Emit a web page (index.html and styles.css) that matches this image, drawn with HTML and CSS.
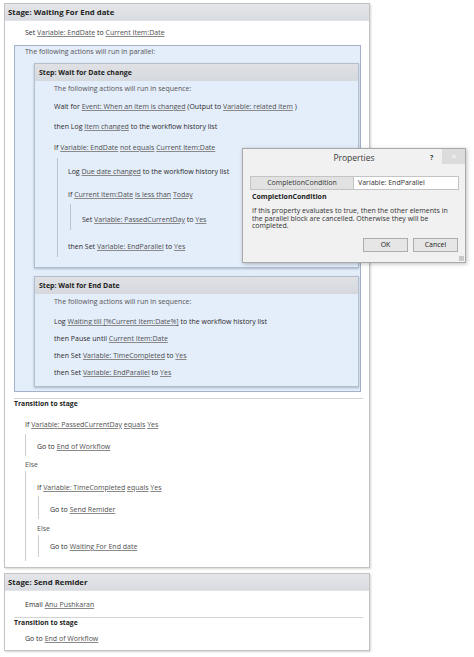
FILE: index.html
```html
<!DOCTYPE html>
<html lang="en">
<head>
  <meta charset="UTF-8" />
  <title>Workflow - Waiting For End date</title>
  <link rel="stylesheet" href="styles.css">
</head>
<body>
  <div class="stage">
    <div class="stage-head">Stage: Waiting For End date</div>
    <div class="stage-body">
      <div class="row in1 mt6">Set <a>Variable: EndDate</a> to <a>Current Item:Date</a></div>

      <div class="parallel">
        <div class="row in-par dim">The following actions will run in parallel:</div>

        <div class="step">
          <div class="step-head">Step: Wait for Date change</div>
          <div class="step-body">
            <div class="row mt2 dim">The following actions will run in sequence:</div>
            <div class="row mt6">Wait for <a>Event: When an item is changed</a> (Output to <a>Variable: related item</a> )</div>
            <div class="row mt8">then Log <a>Item changed</a> to the workflow history list</div>
            <div class="row mt9">If <a>Variable: EndDate</a> <a>not equals</a> <a>Current Item:Date</a></div>
            <div class="block block-one">
              <div class="row">Log <a>Due date changed</a> to the workflow history list</div>
              <div class="row mt11">If <a>Current Item:Date</a> <a>is less than</a> <a>Today</a></div>
              <div class="block block-two">
                <div class="row">Set <a>Variable: PassedCurrentDay</a> to <a>Yes</a></div>
              </div>
              <div class="row mt11">then Set <a>Variable: EndParallel</a> to <a>Yes</a></div>
            </div>
          </div>
        </div>

        <div class="step step-second">
          <div class="step-head">Step: Wait for End Date</div>
          <div class="step-body short">
            <div class="row mt2 dim">The following actions will run in sequence:</div>
            <div class="row mt8">Log <a>Waiting till [%Current Item:Date%]</a> to the workflow history list</div>
            <div class="row mt5">then Pause until <a>Current Item:Date</a></div>
            <div class="row mt5">then Set <a>Variable: TimeCompleted</a> to <a>Yes</a></div>
            <div class="row mt5">then Set <a>Variable: EndParallel</a> to <a>Yes</a></div>
          </div>
        </div>
      </div>

      <div class="transition">
        <div class="trans-title">Transition to stage</div>
        <div class="row in1 mt10">If <a>Variable: PassedCurrentDay</a> <a>equals</a> <a>Yes</a></div>
        <div class="branch if-body">
          <div class="row">Go to <a>End of Workflow</a></div>
        </div>
        <div class="row in1 mt3 dim">Else</div>
        <div class="branch else-body">
          <div class="row">If <a>Variable: TimeCompleted</a> <a>equals</a> <a>Yes</a></div>
          <div class="branch inner inner-if">
            <div class="row">Go to <a>Send Remider</a></div>
          </div>
          <div class="row mt4 dim">Else</div>
          <div class="branch inner inner-else">
            <div class="row">Go to <a>Waiting For End date</a></div>
          </div>
        </div>
      </div>
    </div>
  </div>

  <div class="stage stage-second">
    <div class="stage-head">Stage: Send Remider</div>
    <div class="stage-body last">
      <div class="row in1 mt8">Email <a>Anu Pushkaran</a></div>
      <div class="transition small">
        <div class="trans-title">Transition to stage</div>
        <div class="row in1 mt5">Go to <a>End of Workflow</a></div>
      </div>
    </div>
  </div>

  <!-- Properties dialog -->
  <div class="dialog">
    <div class="dialog-title">
      <span>Properties</span>
      <span class="help">?</span>
      <span class="close">&#x2715;</span>
    </div>
    <div class="prop-grid">
      <div class="prop-name">CompletionCondition</div>
      <div class="prop-value">Variable: EndParallel</div>
    </div>
    <div class="prop-label">CompletionCondition</div>
    <p class="prop-desc">If this property evaluates to true, then the other elements in the parallel block are cancelled. Otherwise they will be completed.</p>
    <div class="dialog-buttons">
      <button>OK</button>
      <button>Cancel</button>
    </div>
    <div class="grip"></div>
  </div>
</body>
</html>
```

FILE: styles.css
```css
body {
  margin: 0;
  background: white;
  font-family: "Open Sans", "Noto Sans", sans-serif;
  font-size: 7px;
  color: #2b2b2b;
  position: relative;
  width: 474px;
  height: 657px;
  overflow: hidden;
}

a {
  color: #505050;
  text-decoration: underline;
  text-decoration-color: #8a8a8a;
}

.row {
  line-height: 12px;
  height: 12px;
  white-space: nowrap;
}

.dim {
  color: #555;
}

.in1 { padding-left: 11px; }
.mt2 { margin-top: 2px; }
.mt3 { margin-top: 3px; }
.mt4 { margin-top: 4px; }
.mt5 { margin-top: 5px; }
.mt6 { margin-top: 6px; }
.mt8 { margin-top: 8px; }
.mt9 { margin-top: 9px; }
.mt10 { margin-top: 10px; }
.mt11 { margin-top: 11px; }

/* stages */
.stage {
  margin: 3px 0 0 4px;
  width: 366px;
  box-sizing: border-box;
  border: 1px solid #c3c3c3;
  background: white;
  box-shadow: 1px 1px 2px rgba(0, 0, 0, 0.18);
}

.stage-second {
  margin-top: 5px;
}

.stage-head {
  height: 17px;
  line-height: 17px;
  padding-left: 3px;
  font-size: 7.8px;
  font-weight: bold;
  color: #222;
  background: linear-gradient(#e4e6e9, #d8dbe0);
  border-bottom: 1px solid #e2e4e7;
  box-sizing: border-box;
}

.stage-body {
  padding: 0 6px 6px 9px;
}

.stage-body.last {
  padding-bottom: 5px;
}

/* parallel block */
.parallel {
  margin-top: 6px;
  width: 347px;
  box-sizing: border-box;
  border: 1px solid #a3b2c8;
  background: #e4edfa;
  padding-bottom: 4px;
}

.in-par {
  padding-left: 10px;
}

.step {
  margin: 5px 0 0 19px;
  width: 325px;
  box-sizing: border-box;
  border: 1px solid #b3bfcf;
  background: #e4edfa;
  box-shadow: 0 1px 2px rgba(60, 80, 110, 0.35);
}

.step-second {
  margin-top: 8px;
}

.step-head {
  height: 17px;
  line-height: 17px;
  padding-left: 4px;
  font-size: 7px;
  font-weight: bold;
  color: #222;
  background: linear-gradient(#dfe1e5, #d5d8dd);
}

.step-body {
  padding: 0 0 10px 19px;
}

.step-body.short {
  padding-bottom: 7px;
}

.block {
  border-left: 1px solid #b9c3d1;
}

.block-one {
  margin: 4px 0 0 3px;
  padding: 8px 0 4px 10px;
}

.block-two {
  margin: 3px 0 0 2px;
  padding: 10px 0 4px 11px;
}

/* transitions */
.transition {
  margin-top: 6px;
  border-top: 1px solid #d3d3d3;
}

.trans-title {
  line-height: 10px;
  height: 10px;
  font-size: 6.8px;
  font-weight: bold;
  color: #222;
}

.branch {
  border-left: 1px solid #cdcdcd;
  margin-left: 11px;
  padding-left: 11px;
}

.if-body {
  margin-top: 3px;
  padding-top: 7px;
  padding-bottom: 3px;
}

.else-body {
  padding-top: 11px;
  padding-bottom: 4px;
}

.branch.inner {
  margin-left: 1px;
}

.inner-if {
  margin-top: 2px;
  padding-top: 8px;
  padding-bottom: 3px;
}

.inner-else {
  padding-top: 6px;
  padding-bottom: 4px;
}

/* properties dialog */
.dialog {
  position: absolute;
  left: 242px;
  top: 148px;
  width: 224px;
  height: 115px;
  box-sizing: border-box;
  border: 1px solid #a9a9a9;
  background: #f1f1f1;
  box-shadow: 1px 1px 4px rgba(0, 0, 0, 0.25);
}

.dialog-title {
  position: relative;
  height: 19px;
  line-height: 18px;
  text-align: center;
  font-size: 8.5px;
  color: #3a3a3a;
}

.help {
  position: absolute;
  left: 187px;
  top: 0;
  font-size: 7px;
  font-weight: bold;
  color: #444;
}

.close {
  position: absolute;
  right: 0;
  top: 0;
  width: 23px;
  height: 15px;
  line-height: 15px;
  background: #dcdcdc;
  color: #f7f7f7;
  font-size: 7px;
}

.prop-grid {
  display: flex;
  margin: 8px 0 0 7px;
  width: 209px;
  height: 14px;
  box-sizing: border-box;
  border: 1px solid #c4c4c4;
  line-height: 12px;
}

.prop-name {
  width: 102px;
  text-align: center;
  background: #e2e2e2;
  border-right: 1px solid #c4c4c4;
  color: #333;
}

.prop-value {
  flex: 1;
  padding-left: 4px;
  background: white;
  color: #333;
}

.prop-label {
  margin: 2px 0 0 9px;
  line-height: 10px;
  font-weight: bold;
  color: #222;
}

.prop-desc {
  margin: 5px 12px 0 9px;
  line-height: 7.6px;
  color: #333;
}

.dialog-buttons {
  display: flex;
  justify-content: flex-end;
  gap: 5px;
  margin: 8px 7px 0 0;
}

.dialog-buttons button {
  width: 45px;
  height: 14px;
  padding: 0;
  font-family: inherit;
  font-size: 7px;
  color: #222;
  background: #e6e6e6;
  border: 1px solid #adadad;
}

.grip {
  position: absolute;
  right: 1px;
  bottom: 1px;
  width: 5px;
  height: 5px;
  background: radial-gradient(circle, #9a9a9a 0.6px, transparent 0.8px) 0 0 / 2px 2px;
}
```
